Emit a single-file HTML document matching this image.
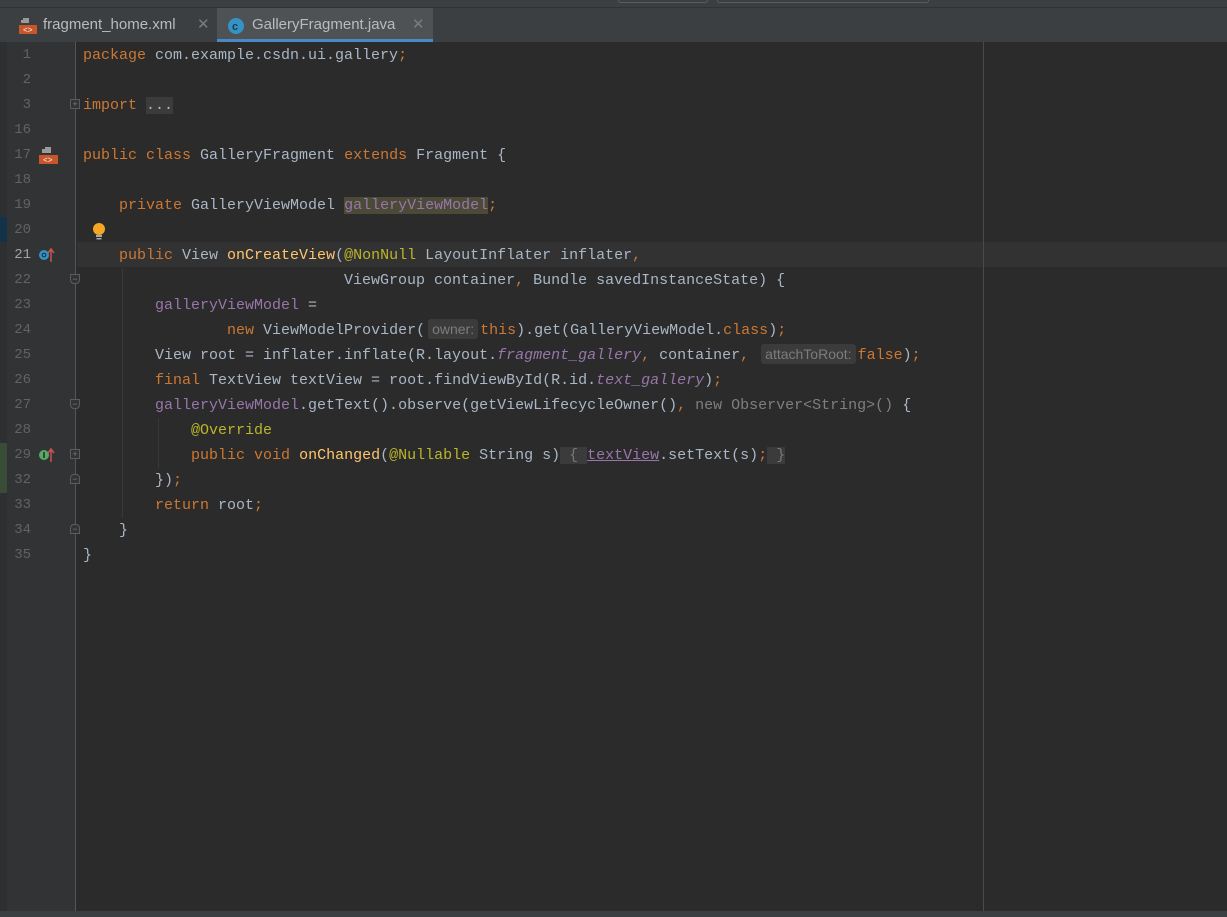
<!DOCTYPE html>
<html><head><meta charset="utf-8"><style>
*{margin:0;padding:0;box-sizing:border-box}
body{width:1227px;height:917px;background:#2b2b2b;overflow:hidden;position:relative;font-family:"Liberation Mono",monospace;font-size:15px}
.top{position:absolute;left:0;top:0;width:1227px;height:8px;background:#3c3f41;border-bottom:1px solid #323232}
.tabs{position:absolute;left:0;top:8px;width:1227px;height:34px;background:#3c3f41}
.tab{position:absolute;top:0;height:34px;font-family:"Liberation Sans",sans-serif;font-size:15px;color:#bbbbbb;line-height:34px}
.tab.active{background:#4e5254;border-bottom:3px solid #4a88c7}
.x{position:absolute;color:#7a7d80;font-size:15px}
.gut{position:absolute;left:0;top:42px;width:76px;height:869px;background:#313335;border-right:1px solid #555}
.stripe{position:absolute;left:0;top:42px;width:7px;height:869px;background:#2d2f31}
.bottom{position:absolute;left:0;top:911px;width:1227px;height:6px;background:#3c3f41}
.margin{position:absolute;left:983px;top:42px;width:1px;height:869px;background:#4a4a4a}
.ln{position:absolute;left:0;width:31px;text-align:right;color:#606366;font-size:14px;line-height:25px;height:25px}
.row{position:absolute;left:83px;height:25px;line-height:25px;white-space:pre;color:#a9b7c6}
.k{color:#cc7832}.f{color:#9876aa}.a{color:#bbb529}.m{color:#ffc66d}.i{font-style:italic;color:#9876aa}.g{color:#7f7f7f}
.h{display:inline-block;background:#3b3b3b;color:#7c7c7c;font-family:"Liberation Sans",sans-serif;font-size:14px;line-height:20px;padding:0 4px;border-radius:3px;margin:0 2px 0 3px}
.fold{position:absolute;left:70px;width:10px;height:10px;border:1px solid #5a5d60;background:#313335;color:#777;font-size:9px;line-height:8px;text-align:center;font-family:"Liberation Sans",sans-serif}
.guide{position:absolute;width:1px;background:#393939}
</style></head><body>
<div class="top"><div style="position:absolute;left:618px;top:-2px;width:90px;height:5px;border:1px solid #5a5d60;border-radius:3px"></div><div style="position:absolute;left:717px;top:-2px;width:212px;height:5px;border:1px solid #5a5d60;border-radius:3px"></div></div>
<div class="tabs">
 <div class="tab" style="left:8px;width:208px">
  <svg style="position:absolute;left:11px;top:9px" width="18" height="17"><path d="M4 1h6v5H4zM2 3h2v3H2z" fill="#9a9a9a"/><rect x="0" y="8" width="18" height="9" fill="#c9562b"/><text x="4" y="15.5" font-size="8" fill="#fff" font-family="Liberation Mono">&lt;&gt;</text></svg>
  <span style="position:absolute;left:35px">fragment_home.xml</span><span class="x" style="left:189px">✕</span></div>
 <div class="tab active" style="left:217px;width:216px">
  <svg style="position:absolute;left:10px;top:9px" width="18" height="18"><circle cx="9" cy="9" r="8" fill="#3592c4"/><text x="5" y="13" font-size="11" fill="#1e3a4a" font-family="Liberation Sans" font-weight="bold">c</text></svg>
  <span style="position:absolute;left:35px">GalleryFragment.java</span><span class="x" style="left:195px">✕</span></div>
</div>
<div class="gut"></div><div class="stripe"></div>
<div style="position:absolute;left:0;top:217px;width:7px;height:25px;background:#12324a"></div>
<div style="position:absolute;left:0;top:443px;width:7px;height:50px;background:#384c38"></div>
<div style="position:absolute;left:77px;top:242px;width:1150px;height:25px;background:#323232"></div>
<div class="margin"></div>
<div class="bottom"></div>
<div class="guide" style="left:122px;top:268px;height:250px"></div>
<div class="guide" style="left:158px;top:418px;height:50px"></div>

<div class="ln" style="top:43px">1</div>
<div class="ln" style="top:68px">2</div>
<div class="ln" style="top:93px">3</div>
<div class="ln" style="top:118px">16</div>
<div class="ln" style="top:143px">17</div>
<div class="ln" style="top:168px">18</div>
<div class="ln" style="top:193px">19</div>
<div class="ln" style="top:218px">20</div>
<div class="ln" style="top:243px;color:#a4a3a3">21</div>
<div class="ln" style="top:268px">22</div>
<div class="ln" style="top:293px">23</div>
<div class="ln" style="top:318px">24</div>
<div class="ln" style="top:343px">25</div>
<div class="ln" style="top:368px">26</div>
<div class="ln" style="top:393px">27</div>
<div class="ln" style="top:418px">28</div>
<div class="ln" style="top:443px">29</div>
<div class="ln" style="top:468px">32</div>
<div class="ln" style="top:493px">33</div>
<div class="ln" style="top:518px">34</div>
<div class="ln" style="top:543px">35</div>

<svg style="position:absolute;left:39px;top:146px" width="20" height="18"><path d="M6 1h6v6H6zM3 3h3v4H3z" fill="#9a9a9a"/><rect x="0" y="9" width="19" height="9" fill="#c9562b"/><text x="4" y="16.5" font-size="8" fill="#fff" font-family="Liberation Mono">&lt;&gt;</text></svg>
<svg style="position:absolute;left:92px;top:223px" width="14" height="18"><circle cx="7" cy="6" r="6" fill="#f5a623"/><rect x="4" y="12" width="6" height="2" fill="#aaa"/><rect x="4.5" y="15" width="5" height="1.5" fill="#aaa"/></svg>
<svg style="position:absolute;left:38px;top:247px" width="18" height="16"><circle cx="6" cy="8" r="5" fill="#3592c4"/><circle cx="6" cy="8" r="1.8" fill="none" stroke="#1e3a4a" stroke-width="1.2"/><path d="M13 15V3M10 6l3-4 3 4" stroke="#c75450" stroke-width="1.5" fill="none"/></svg>
<svg style="position:absolute;left:38px;top:447px" width="18" height="16"><circle cx="6" cy="8" r="5" fill="#59a869"/><rect x="5.2" y="5" width="1.6" height="6" fill="#1e3a22"/><path d="M13 15V3M10 6l3-4 3 4" stroke="#c75450" stroke-width="1.5" fill="none"/></svg>

<div class="fold" style="top:99px">+</div>
<div class="fold" style="top:274px;border-radius:0 0 4px 4px">−</div>
<div class="fold" style="top:399px;border-radius:0 0 4px 4px">−</div>
<div class="fold" style="top:449px">+</div>
<div class="fold" style="top:474px;border-radius:4px 4px 0 0">−</div>
<div class="fold" style="top:524px;border-radius:4px 4px 0 0">−</div>

<div class="row" style="top:43px"><span class="k">package</span> com.example.csdn.ui.gallery<span class="k">;</span></div>
<div class="row" style="top:93px"><span class="k">import</span> <span style="background:#3b3b3b">...</span></div>
<div class="row" style="top:143px"><span class="k">public class</span> GalleryFragment <span class="k">extends</span> Fragment {</div>
<div class="row" style="top:193px">    <span class="k">private</span> GalleryViewModel <span class="f" style="background:#4a4a36">galleryViewModel</span><span class="k">;</span></div>
<div class="row" style="top:243px">    <span class="k">public</span> View <span class="m">onCreateView</span>(<span class="a">@NonNull</span> LayoutInflater inflater<span class="k">,</span></div>
<div class="row" style="top:268px">                             ViewGroup container<span class="k">,</span> Bundle savedInstanceState) {</div>
<div class="row" style="top:293px">        <span class="f">galleryViewModel</span> =</div>
<div class="row" style="top:318px">                <span class="k">new</span> ViewModelProvider(<span class="h">owner:</span><span class="k">this</span>).get(GalleryViewModel.<span class="k">class</span>)<span class="k">;</span></div>
<div class="row" style="top:343px">        View root = inflater.inflate(R.layout.<span class="i">fragment_gallery</span><span class="k">,</span> container<span class="k">,</span> <span class="h">attachToRoot:</span><span class="k">false</span>)<span class="k">;</span></div>
<div class="row" style="top:368px">        <span class="k">final</span> TextView textView = root.findViewById(R.id.<span class="i">text_gallery</span>)<span class="k">;</span></div>
<div class="row" style="top:393px">        <span class="f">galleryViewModel</span>.getText().observe(getViewLifecycleOwner()<span class="k">,</span> <span class="g">new Observer&lt;String&gt;()</span> {</div>
<div class="row" style="top:418px">            <span class="a">@Override</span></div>
<div class="row" style="top:443px">            <span class="k">public void</span> <span class="m">onChanged</span>(<span class="a">@Nullable</span> String s)<span style="background:#3b3b3b;color:#777"> { </span><span class="f" style="text-decoration:underline">textView</span>.setText(s)<span class="k">;</span><span style="background:#3b3b3b;color:#777"> }</span></div>
<div class="row" style="top:468px">        })<span class="k">;</span></div>
<div class="row" style="top:493px">        <span class="k">return</span> root<span class="k">;</span></div>
<div class="row" style="top:518px">    }</div>
<div class="row" style="top:543px">}</div>
</body></html>
